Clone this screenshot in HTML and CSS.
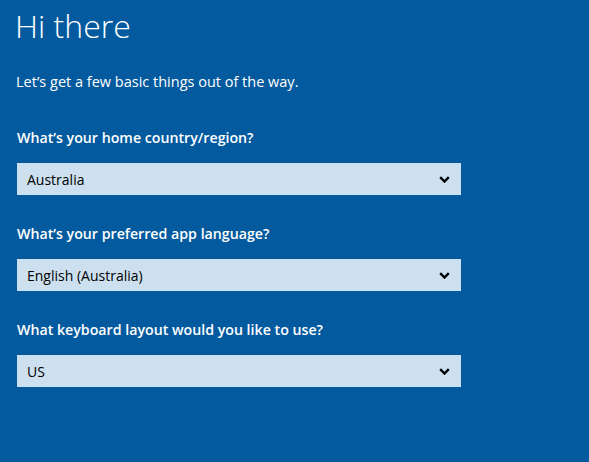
FILE: index.html
```html
<!DOCTYPE html>
<html lang="en">
<head>
<meta charset="utf-8">
<title>Hi there</title>
<link rel="stylesheet" href="styles.css">
</head>
<body>
<main class="page">
  <h1 class="title">Hi there</h1>
  <p class="intro">Let’s get a few basic things out of the way.</p>
  <section class="field">
    <h2 class="label">What’s your home country/region?</h2>
    <div class="select"><span>Australia</span><svg class="chev" viewBox="0 0 11 7" width="11" height="7"><path d="M1.2 1.2 L5.5 5.5 L9.8 1.2" fill="none" stroke="#000" stroke-width="2.4"/></svg></div>
  </section>
  <section class="field">
    <h2 class="label">What’s your preferred app language?</h2>
    <div class="select"><span>English (Australia)</span><svg class="chev" viewBox="0 0 11 7" width="11" height="7"><path d="M1.2 1.2 L5.5 5.5 L9.8 1.2" fill="none" stroke="#000" stroke-width="2.4"/></svg></div>
  </section>
  <section class="field">
    <h2 class="label">What keyboard layout would you like to use?</h2>
    <div class="select"><span>US</span><svg class="chev" viewBox="0 0 11 7" width="11" height="7"><path d="M1.2 1.2 L5.5 5.5 L9.8 1.2" fill="none" stroke="#000" stroke-width="2.4"/></svg></div>
  </section>
</main>
</body>
</html>
```
FILE: styles.css
```css
html, body {
  margin: 0;
  padding: 0;
  background: #035a9e;
  height: 100%;
}
body {
  font-family: "Open Sans", "Noto Sans", sans-serif;
  color: #fff;
}
.page {
  padding: 4px 0 0 17px;
  width: 444px;
}
.title {
  margin: 0 0 0 -2px;
  font-size: 32px;
  font-weight: 300;
  line-height: 44px;
}
.intro {
  margin: 24px 0 0 -1px;
  font-size: 14.5px;
  line-height: 20px;
}
.field {
  margin-top: 36px;
}
.field + .field {
  margin-top: 29px;
}
.label {
  margin: 0;
  font-size: 14.2px;
  font-weight: 600;
  line-height: 20px;
}
.select {
  margin-top: 15px;
  height: 32px;
  background: #cde0ef;
  color: #000;
  display: flex;
  align-items: center;
  justify-content: space-between;
  padding: 0 11px 0 10px;
  font-size: 14px;
}
.chev {
  display: block;
}
```
